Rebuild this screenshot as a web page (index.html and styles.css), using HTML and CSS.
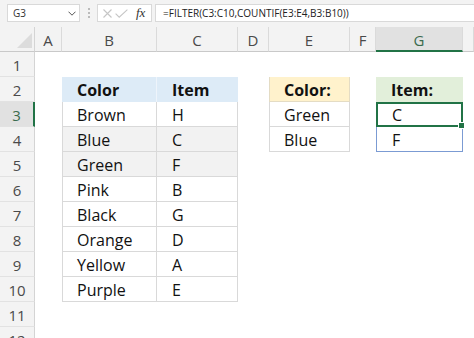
FILE: index.html
```html
<!DOCTYPE html>
<html>
<head>
<meta charset="utf-8">
<link rel="stylesheet" href="styles.css">
</head>
<body>
<div class="fbar">
  <div class="namebox"><span>G3</span><svg class="chev" width="8" height="5" viewBox="0 0 8 5"><path d="M0.5 0.7 L4 4.2 L7.5 0.7" fill="none" stroke="#555" stroke-width="1"/></svg></div>
  <div class="grip"><i></i><i></i><i></i></div>
  <div class="fxbox">
    <svg class="ico-x" width="9" height="9" viewBox="0 0 9 9"><path d="M0.5 0.5L8.5 8.5M8.5 0.5L0.5 8.5" stroke="#c6c6c6" stroke-width="1.1"/></svg>
    <svg class="ico-ok" width="13" height="9" viewBox="0 0 13 9"><path d="M0.6 4.6L4.2 8.2L12.4 0.6" fill="none" stroke="#c6c6c6" stroke-width="1.1"/></svg>
    <span class="fx">fx</span>
  </div>
  <div class="formula">=FILTER(C3:C10,COUNTIF(E3:E4,B3:B10))</div>
</div>
<div class="sheet">
  <div class="corner"><svg width="35" height="25" viewBox="0 0 35 25"><polygon points="32,6 32,21 17,21" fill="#dcdcdc"/></svg></div>
  <div class="ch">A</div><div class="ch">B</div><div class="ch">C</div><div class="ch">D</div><div class="ch">E</div><div class="ch">F</div><div class="ch sel">G</div><div class="ch"></div>

  <div class="rh">1</div><div class="c"></div><div class="c"></div><div class="c"></div><div class="c"></div><div class="c"></div><div class="c"></div><div class="c"></div><div class="c"></div>

  <div class="rh">2</div><div class="c"></div><div class="th thb sep">Color</div><div class="th thb">Item</div><div class="c"></div><div class="th tho">Color:</div><div class="c"></div><div class="th thg">Item:</div><div class="c"></div>

  <div class="rh sel">3</div><div class="c"></div><div class="t l">Brown</div><div class="t">H</div><div class="c"></div><div class="t l">Green</div><div class="c"></div><div class="cur">C<span class="handle"></span></div><div class="c"></div>

  <div class="rh">4</div><div class="c"></div><div class="t l hi">Blue</div><div class="t hi">C</div><div class="c"></div><div class="t l">Blue</div><div class="c"></div><div class="spill">F</div><div class="c"></div>

  <div class="rh">5</div><div class="c"></div><div class="t l hi">Green</div><div class="t hi">F</div><div class="c"></div><div class="c"></div><div class="c"></div><div class="c"></div><div class="c"></div>

  <div class="rh">6</div><div class="c"></div><div class="t l">Pink</div><div class="t">B</div><div class="c"></div><div class="c"></div><div class="c"></div><div class="c"></div><div class="c"></div>

  <div class="rh">7</div><div class="c"></div><div class="t l">Black</div><div class="t">G</div><div class="c"></div><div class="c"></div><div class="c"></div><div class="c"></div><div class="c"></div>

  <div class="rh">8</div><div class="c"></div><div class="t l">Orange</div><div class="t">D</div><div class="c"></div><div class="c"></div><div class="c"></div><div class="c"></div><div class="c"></div>

  <div class="rh">9</div><div class="c"></div><div class="t l">Yellow</div><div class="t">A</div><div class="c"></div><div class="c"></div><div class="c"></div><div class="c"></div><div class="c"></div>

  <div class="rh">10</div><div class="c"></div><div class="t l">Purple</div><div class="t">E</div><div class="c"></div><div class="c"></div><div class="c"></div><div class="c"></div><div class="c"></div>

  <div class="rh">11</div><div class="c"></div><div class="c"></div><div class="c"></div><div class="c"></div><div class="c"></div><div class="c"></div><div class="c"></div><div class="c"></div>

  <div class="rh">12</div><div class="c"></div><div class="c"></div><div class="c"></div><div class="c"></div><div class="c"></div><div class="c"></div><div class="c"></div><div class="c"></div>
</div>
</body>
</html>
```

FILE: styles.css
```css
html, body {
  margin: 0;
  padding: 0;
  width: 474px;
  height: 338px;
  overflow: hidden;
  background: #ffffff;
  font-family: "Open Sans", "Noto Sans", sans-serif;
}

/* formula bar */
.fbar {
  display: flex;
  align-items: flex-start;
  height: 27px;
  box-sizing: border-box;
  padding: 4px 0 0 7px;
  background: #f3f3f3;
}
.namebox {
  box-sizing: border-box;
  width: 73px;
  height: 18px;
  background: #fff;
  border: 1px solid #d9d9d9;
  display: flex;
  align-items: center;
  justify-content: space-between;
  padding: 0 3px 0 5px;
  font-size: 10px;
  color: #333;
}
.grip {
  width: 17px;
  height: 18px;
  display: flex;
  flex-direction: column;
  align-items: center;
  justify-content: center;
  gap: 2px;
}
.grip i {
  display: block;
  width: 2px;
  height: 2px;
  border-radius: 50%;
  background: #a8a8a8;
}
.fxbox {
  box-sizing: border-box;
  width: 55px;
  height: 18px;
  background: #fff;
  border: 1px solid #d9d9d9;
  display: flex;
  align-items: center;
  padding-left: 5px;
}
.ico-ok { margin-left: 3px; }
.fx {
  margin-left: 8px;
  font-family: "Liberation Serif", "DejaVu Serif", serif;
  font-style: italic;
  font-size: 13px;
  line-height: 16px;
  color: #333;
}
.formula {
  margin-left: 3px;
  flex: 1;
  box-sizing: border-box;
  height: 18px;
  background: #fff;
  border: 1px solid #d9d9d9;
  border-right: 0;
  padding-left: 7px;
  font-size: 10px;
  line-height: 16px;
  color: #222;
  white-space: nowrap;
}

/* sheet grid */
.sheet {
  display: grid;
  grid-template-columns: 35px 27px 95px 81px 31px 81px 26px 87px 1fr;
  grid-auto-rows: 25px;
  font-size: 16px;
  color: #111;
}
.sheet > div {
  box-sizing: border-box;
  white-space: nowrap;
  overflow: visible;
}
.corner {
  background: #f3f3f3;
  border-right: 1px solid #d4d4d4;
  border-bottom: 1px solid #c9c9c9;
}
.corner svg { display: block; }
.ch {
  background: #f3f3f3;
  border-right: 1px solid #dadada;
  border-bottom: 1px solid #c9c9c9;
  text-align: center;
  font-size: 15px;
  line-height: 23px;
  padding-top: 2px;
  color: #4a4a4a;
}
.ch.sel {
  background: #e1e1e1;
  border-bottom: 2px solid #217346;
  color: #3b6b4e;
}
.rh {
  background: #f3f3f3;
  border-right: 1px solid #d4d4d4;
  border-bottom: 1px solid #e2e2e2;
  text-align: center;
  font-size: 15px;
  line-height: 23px;
  padding-top: 2px;
  color: #4a4a4a;
}
.rh.sel {
  background: #e1e1e1;
  border-right: 2px solid #217346;
  color: #3b6b4e;
}
.c { background: #fff; }

.th, .t, .cur, .spill {
  line-height: 23px;
  padding-top: 2px;
  padding-left: 15px;
}
.th { font-weight: 700; }
.thb { background: #ddebf7; }
.thb.sep { border-right: 1px solid #eef4fb; }
.tho {
  background: #fff2cc;
  border: 1px solid #e4dcc4;
  border-top: 0;
  padding-left: 14px;
}
.thg { background: #e2efda; }

.t {
  background: #fff;
  border-right: 1px solid #d9d9d9;
  border-bottom: 1px solid #d9d9d9;
}
.t.l {
  border-left: 1px solid #d9d9d9;
  padding-left: 14px;
}
.t.hi { background: #f2f2f2; }

.cur {
  position: relative;
  background: #fff;
  border: 2px solid #217346;
  padding-top: 0;
  padding-left: 14px;
  line-height: 23px;
}
.handle {
  position: absolute;
  right: -4px;
  bottom: -4px;
  width: 5px;
  height: 5px;
  background: #217346;
  border: 1px solid #fff;
}
.spill {
  background: #fff;
  border-left: 1px solid #7b9bd3;
  border-right: 1px solid #7b9bd3;
  border-bottom: 1px solid #7b9bd3;
  padding-left: 15px;
}
```
